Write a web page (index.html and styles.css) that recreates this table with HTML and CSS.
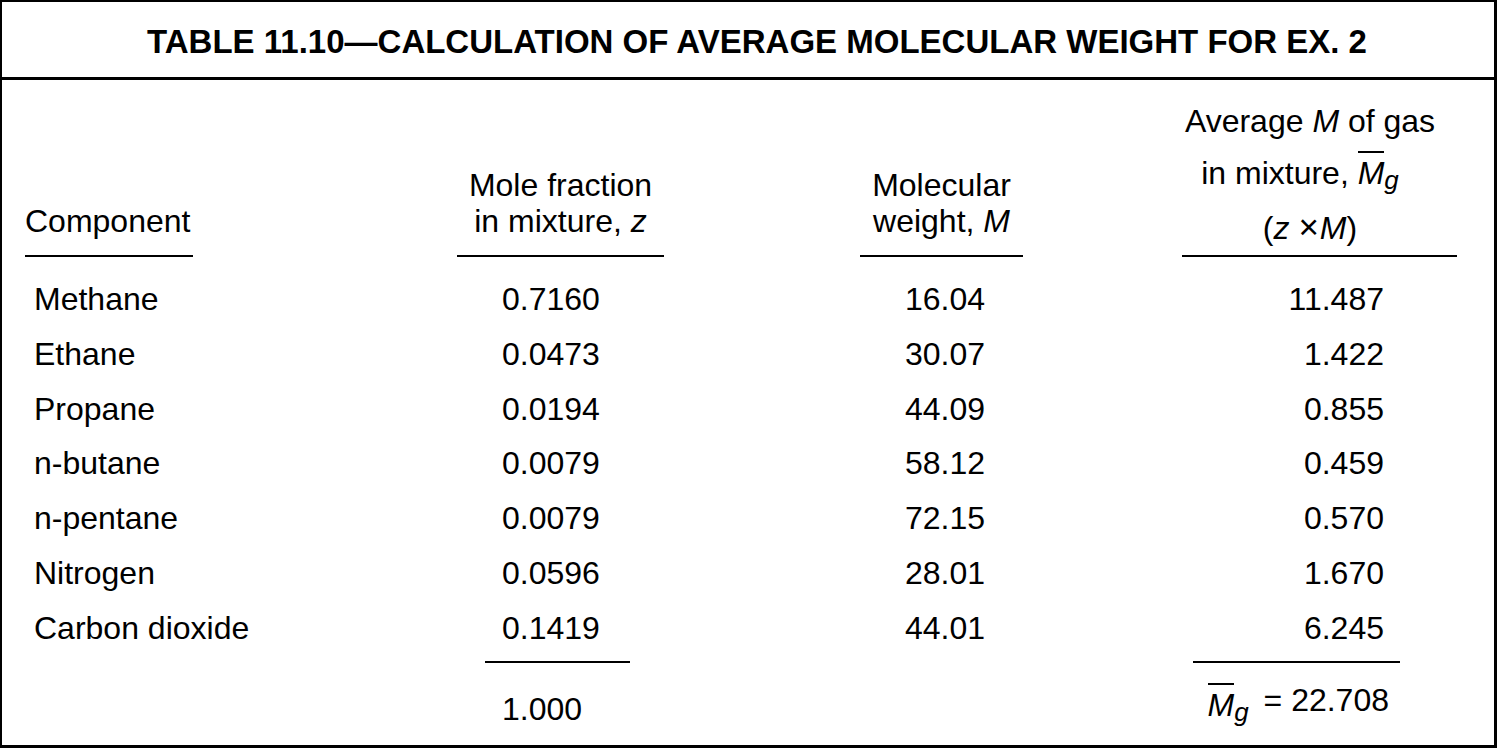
FILE: index.html
```html
<!DOCTYPE html>
<html lang="en">
<head>
<meta charset="utf-8">
<title>Table 11.10</title>
<link rel="stylesheet" href="styles.css">
</head>
<body>
<div class="sheet">
  <div class="title">TABLE 11.10—CALCULATION OF AVERAGE MOLECULAR WEIGHT FOR EX. 2</div>

  <div class="grid head">
    <div class="hc c1"><span>Component</span></div>
    <div class="hc c2"><span>Mole fraction</span><span>in mixture, <i class="v">z</i></span></div>
    <div class="hc c3"><span>Molecular</span><span>weight, <i class="v">M</i></span></div>
    <div class="hc c4 tall"><span>Average <i class="v">M</i> of gas</span><span class="l2">in mixture, <i class="v bar">M</i><i class="v sub">g</i></span><span class="l3">(<i class="v">z</i> <span class="times">×</span><i class="v">M</i>)</span></div>
  </div>

  <div class="grid rows">
    <div class="d c1">Methane</div><div class="d c2">0.7160</div><div class="d c3">16.04</div><div class="d c4">11.487</div>
    <div class="d c1">Ethane</div><div class="d c2">0.0473</div><div class="d c3">30.07</div><div class="d c4">1.422</div>
    <div class="d c1">Propane</div><div class="d c2">0.0194</div><div class="d c3">44.09</div><div class="d c4">0.855</div>
    <div class="d c1">n-butane</div><div class="d c2">0.0079</div><div class="d c3">58.12</div><div class="d c4">0.459</div>
    <div class="d c1">n-pentane</div><div class="d c2">0.0079</div><div class="d c3">72.15</div><div class="d c4">0.570</div>
    <div class="d c1">Nitrogen</div><div class="d c2">0.0596</div><div class="d c3">28.01</div><div class="d c4">1.670</div>
    <div class="d c1">Carbon dioxide</div><div class="d c2">0.1419</div><div class="d c3">44.01</div><div class="d c4">6.245</div>
  </div>

  <div class="grid totals">
    <div class="t c2"><div class="rule"></div><div class="val">1.000</div></div>
    <div class="t c4"><div class="rule"></div><div class="val"><span class="mg"><i class="v bar">M</i><i class="v sub">g</i></span> = 22.708</div></div>
  </div>
</div>
</body>
</html>
```

FILE: styles.css
```css
html, body {
  margin: 0;
  padding: 0;
  background: #fff;
}

body {
  font-family: "Liberation Sans", Arial, Helvetica, sans-serif;
  color: #000;
}

.sheet {
  width: 1497px;
  height: 748px;
  box-sizing: border-box;
  border-style: solid;
  border-color: #000;
  border-width: 2px 3px 3px 2px;
  overflow: hidden;
}

.title {
  height: 78px;
  box-sizing: border-box;
  border-bottom: 3px solid #000;
  padding-top: 21px;
  padding-left: 18px;
  font-size: 33px;
  line-height: 38px;
  font-weight: bold;
  text-align: center;
  white-space: nowrap;
}

.grid {
  display: grid;
  grid-template-columns: 168px 264px 207px 196px 163px 159px 275px;
  padding-left: 23px;
  font-size: 32px;
}

.c1 { grid-column: 1; }
.c2 { grid-column: 3; }
.c3 { grid-column: 5; }
.c4 { grid-column: 7; }

.v { font-style: italic; }

.bar {
  border-top: 2px solid #000;
  padding-top: 2px;
}

.sub {
  font-size: 26px;
  line-height: 0;
  vertical-align: -5px;
}

.times {
  font-size: 35px;
  line-height: 0;
  margin-right: 1px;
}

/* header */
.head {
  height: 177px;
  align-items: end;
}

.hc {
  display: flex;
  flex-direction: column;
  align-items: center;
  border-bottom: 2px solid #000;
  padding-bottom: 16px;
  line-height: 36px;
  white-space: nowrap;
}

.hc.c1 { align-items: flex-start; }

.hc.tall {
  line-height: 52px;
  padding-bottom: 1px;
  padding-right: 19px;
}

.hc .l2 { margin-right: 20px; }
.hc .l3 { margin-top: 3px; }

/* data rows */
.rows {
  padding-top: 15px;
  grid-auto-rows: 54.8px;
}

.d {
  line-height: 54.8px;
  white-space: nowrap;
}

.d.c1 { padding-left: 9px; }
.d.c2 { padding-left: 45px; }
.d.c3 { padding-left: 45px; }
.d.c4 { text-align: right; padding-right: 73px; }

/* totals */
.rule {
  height: 2px;
  background: #000;
  margin-top: 5px;
}

.t.c2 .rule { margin-left: 28px; width: 145px; }
.t.c4 .rule { margin-left: 11px; width: 207px; }

.val {
  line-height: 54.8px;
  white-space: nowrap;
}

.t.c2 .val { padding-left: 45px; margin-top: 19px; }
.t.c4 .val { text-align: right; padding-right: 68px; margin-top: 10px; }

.mg {
  vertical-align: -5px;
  margin-right: 6px;
}
```
